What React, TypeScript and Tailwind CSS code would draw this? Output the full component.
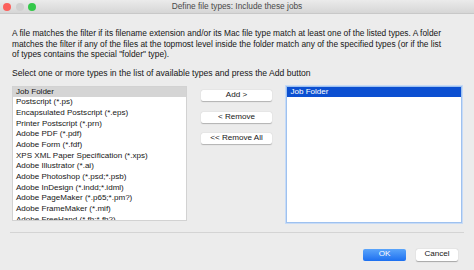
import React from "react";

const leftItems = [
  "Job Folder",
  "Postscript (*.ps)",
  "Encapsulated Postscript (*.eps)",
  "Printer Postscript (*.prn)",
  "Adobe PDF (*.pdf)",
  "Adobe Form (*.fdf)",
  "XPS XML Paper Specification (*.xps)",
  "Adobe Illustrator (*.ai)",
  "Adobe Photoshop (*.psd;*.psb)",
  "Adobe InDesign (*.indd;*.idml)",
  "Adobe PageMaker (*.p65;*.pm?)",
  "Adobe FrameMaker (*.mif)",
  "Adobe FreeHand (*.fh;*.fh?)",
];

export default function App() {
  return (
    <div
      className="w-[474px] h-[270px] bg-[#ececec] overflow-hidden flex flex-col text-[#161616]"
      style={{ fontFamily: '"Liberation Sans", Arial, sans-serif' }}
    >
      {/* Title bar */}
      <div className="relative h-[14px] shrink-0 bg-gradient-to-b from-[#ebebeb] to-[#d6d6d6] border-b border-[#c8c8c8] flex items-center justify-center">
        <div className="absolute left-[3px] top-[3px] flex gap-[4.5px]">
          <div className="w-[8px] h-[8px] rounded-full bg-[#fc605c]" />
          <div className="w-[8px] h-[8px] rounded-full bg-[#d0d0d0]" />
          <div className="w-[8px] h-[8px] rounded-full bg-[#34c84a]" />
        </div>
        <span className="text-[8.3px] text-[#4a4a4a] leading-none">Define file types: Include these jobs</span>
      </div>

      <div className="flex flex-col px-[12px]">
        <div className="mt-[14px] text-[8.35px] leading-[10.5px] whitespace-nowrap">
          <div>A file matches the filter if its filename extension and/or its Mac file type match at least one of the listed types. A folder</div>
          <div>matches the filter if any of the files at the topmost level inside the folder match any of the specified types (or if the list</div>
          <div>of types contains the special "folder" type).</div>
        </div>
        <div className="mt-[8.5px] text-[8.6px] leading-[10.5px] whitespace-nowrap">
          Select one or more types in the list of available types and press the Add button
        </div>

        <div className="mt-[7px] flex">
          {/* Left list */}
          <div className="w-[175px] h-[135px] bg-white border border-[#d2d2d2] overflow-hidden">
            {leftItems.map((t, i) => (
              <div
                key={t}
                className={`h-[10.7px] pl-[3px] text-[8.05px] leading-[10.7px] whitespace-nowrap ${
                  i === 0 ? "bg-[#d5d5d5]" : ""
                }`}
              >
                {t}
              </div>
            ))}
          </div>

          {/* Middle buttons */}
          <div className="ml-[14px] w-[72px] flex flex-col gap-[10.5px] pt-[4.5px]">
            {["Add >", "< Remove", "<< Remove All"].map((b) => (
              <div
                key={b}
                className="h-[11px] bg-white rounded-[2px] shadow-[0_0.5px_1px_rgba(0,0,0,0.25)] flex items-center justify-center text-[8.1px] leading-none"
              >
                {b}
              </div>
            ))}
          </div>

          {/* Right list */}
          <div className="ml-[14px] w-[176px] h-[137px] bg-white border border-[#9ec1ef] outline outline-[1px] outline-[#c7dbf6] overflow-hidden">
            <div className="h-[10.7px] pl-[3px] bg-[#0b4fd1] text-white text-[8.05px] leading-[10.7px]">Job Folder</div>
          </div>
        </div>
      </div>

      <div className="mt-[9px] mx-[10px] h-px bg-[#d4d4d4]" />

      <div className="flex justify-end gap-[10px] pr-[16px] mt-[16px]">
        <div className="w-[43px] h-[12px] rounded-[2px] bg-gradient-to-b from-[#5aa4fa] to-[#1c6ff0] text-white text-[8.1px] leading-none flex items-center justify-center">
          OK
        </div>
        <div className="w-[42px] h-[12px] rounded-[2px] bg-white shadow-[0_0.5px_1px_rgba(0,0,0,0.3)] text-[8.1px] leading-none flex items-center justify-center">
          Cancel
        </div>
      </div>
    </div>
  );
}
